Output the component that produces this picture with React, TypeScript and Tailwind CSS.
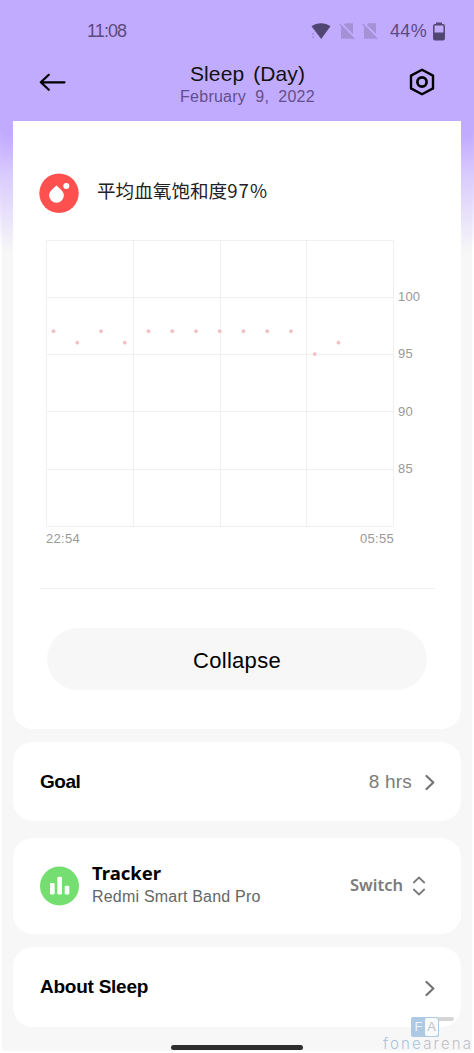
import type { ReactNode } from 'react';
import clsx from 'clsx';

const samples = [97, 96, 97, 96, 97, 97, 97, 97, 97, 97, 97, 95, 96];
const axisTicks = [100, 95, 90, 85];

function NoSimIcon() {
  return (
    <svg width="17" height="18" viewBox="0 0 17 18" aria-hidden="true">
      <path d="M6.500 1.300H14v15.400H2V5.500z" fill="#a592d6" />
      <path d="M2 1.300 16 15.500" stroke="#c1abff" strokeWidth="2" />
      <path d="M.5 2 15.200 17" stroke="#a592d6" strokeWidth="1.400" />
    </svg>
  );
}

function StatusBar() {
  return (
    <div className="flex h-[62px] items-center pr-[26px] pl-[85px] text-[18px] text-[#5b4a80]">
      <span className="tracking-[-0.9px]">11:08</span>
      <div className="ml-auto flex items-center">
        <svg className="mr-[7px]" width="21" height="18" viewBox="0 0 21 18" aria-hidden="true">
          <path d="M.5 4.300C6 .2 14 .2 19.500 4.300L10.200 17z" fill="#514671" />
          <path d="m.5 12.500 1.500-2 1.500 2zM.5 14.500l1.500 2 1.500-2z" fill="#a08bd0" />
        </svg>
        <NoSimIcon />
        <span className="ml-[6px]">
          <NoSimIcon />
        </span>
        <span className="ml-[11px] tracking-[0.3px]">44%</span>
        <svg className="ml-[5px]" width="14" height="19" viewBox="0 0 14 19" aria-hidden="true">
          <path d="M4 .5h6v2H4z" fill="#514671" />
          <rect x="1.800" y="2.700" width="10.400" height="15" rx="1.300" fill="none" stroke="#514671" strokeWidth="1.500" />
          <path d="M2 10.500h10v7H2z" fill="#514671" />
        </svg>
      </div>
    </div>
  );
}

function TitleBar() {
  return (
    <header className="flex h-[59px] items-start pr-[37px] pl-[37px]">
      <button aria-label="Back" className="mt-[11px]">
        <svg width="27" height="20" viewBox="0 0 27 20" fill="none" stroke="#000" strokeWidth="2.200" strokeLinecap="round" strokeLinejoin="round">
          <path d="M1.800 9.300H25.500M9.800 1.800 1.800 9.300l8 7.500" />
        </svg>
      </button>
      <div className="flex-1 pl-[21px] text-center">
        <h1 className="text-[21px] leading-[24px] tracking-[0.1px] text-[#111] [word-spacing:3px]">Sleep (Day)</h1>
        <p className="text-[16px] leading-[22px] tracking-[0.25px] text-[#634e8d] [word-spacing:4.500px]">February 9, 2022</p>
      </div>
      <button aria-label="Settings" className="mr-[-1px] mt-[6px]">
        <svg width="28" height="28" viewBox="0 0 28 28" fill="none" stroke="#000" strokeWidth="2.400" strokeLinejoin="round">
          <path d="M14 1.800 25 7.600v12.800L14 26.200 3 20.400V7.600z" />
          <circle cx="14" cy="14" r="4.600" strokeWidth="2.800" />
        </svg>
      </button>
    </header>
  );
}

function OxygenChart() {
  return (
    <div className="ml-[33px] text-[13px] leading-[14px] text-[#999]">
      <div className="flex">
        <svg width="348" height="288" viewBox="0 0 348 288" aria-hidden="true">
          <g stroke="#f0f0f0">
            {[0, 1, 2, 3, 4].map((i) => (
              <line key={i} x1={0.5 + Math.round(i * 86.8)} x2={0.5 + Math.round(i * 86.8)} y1="0" y2="287" />
            ))}
            {[0, 57, 114, 171, 229, 286].map((y) => (
              <line key={y} x1="0" x2="348" y1={y + 0.5} y2={y + 0.5} />
            ))}
          </g>
          {samples.map((value, i) => (
            <circle key={i} cx={7.5 + i * 23.75} cy={91.2 + (97 - value) * 11.45} r="1.900" fill="#f3bfc6" />
          ))}
        </svg>
        <div className="ml-[4px] flex flex-col gap-[43.300px] pt-[50px] tracking-[0.2px]">
          {axisTicks.map((tick) => (
            <span key={tick}>{tick}</span>
          ))}
        </div>
      </div>
      <div className="mt-[4px] flex w-[348px] justify-between tracking-[0.3px]">
        <span>22:54</span>
        <span>05:55</span>
      </div>
    </div>
  );
}

function Card({ className, children }: { className?: string; children: ReactNode }) {
  return <section className={clsx('flex items-center rounded-[20px] bg-white pr-[26px] pl-[27px]', className)}>{children}</section>;
}

function Chevron() {
  return (
    <svg className="mt-[2px] ml-[13px]" width="10" height="17" viewBox="0 0 10 17" fill="none" stroke="#737373" strokeWidth="2.200" strokeLinecap="round" strokeLinejoin="round">
      <path d="m1.500 2 6.800 6.500L1.500 15" />
    </svg>
  );
}

function Watermark() {
  return (
    <div className="absolute top-[1017px] left-[383px] w-[90px]" aria-hidden="true">
      <div className="ml-[28px] flex items-start">
        <div className="flex h-[20px] w-[28px] rounded-[2px] bg-[#adc9e4] p-[1px] text-center text-[13px] leading-[18px]">
          <span className="w-[13px] text-[#edf4fa]">F</span>
          <span className="w-[13px] rounded-[2px] bg-[#f8fafc] text-[#bdc5cd]">A</span>
        </div>
        <div className="h-[4px] w-[15px] rounded-r-[2px] bg-[#d5d5d5]" />
      </div>
      <p className="font-['Inter','Liberation_Sans',sans-serif] text-[15px] leading-[14px] font-light tracking-[2.200px] whitespace-nowrap text-[#bfc0c6]">
        <span className="text-[#a6c4e0]">fone</span>arena
      </p>
    </div>
  );
}

export default function App() {
  return (
    <div className="relative h-[1053px] w-[474px] overflow-hidden bg-[linear-gradient(#c1abff_130px,#fff_250px)] font-['Liberation_Sans','Noto_Sans_CJK_SC',sans-serif]">
      <div className="mx-[2px] h-[1051px] bg-[linear-gradient(#c1abff_135px,#d9cbfd_175px,#f7f7f7_253px)]">
        <StatusBar />
        <TitleBar />
        <main className="mr-[11px] ml-[11px]">
          <section className="h-[608px] rounded-b-[20px] bg-white pt-[52px]">
            <div className="mb-[27px] ml-[26px] flex h-[40px] items-center">
              <svg width="40" height="40" viewBox="0 0 40 40" aria-hidden="true">
                <circle cx="20" cy="20.300" r="19.700" fill="#ff5050" />
                <path d="M17.500 12.500c3 2.700 7.400 6 7.400 9.800a7.400 7.400 0 0 1-14.800 0c0-3.800 4.400-7.100 7.400-9.800z" fill="#fff" />
                <circle cx="27.300" cy="13.100" r="3" fill="#fff" />
              </svg>
              <h2 className="mt-[-6px] ml-[18px] font-['Noto_Sans_CJK_SC',sans-serif] text-[18.600px] leading-[28px] text-[#222]">
                平均血氧饱和度<span className="tracking-[1.100px]">97%</span>
              </h2>
            </div>
            <OxygenChart />
            <hr className="mt-[42px] mr-[26px] ml-[27px] border-[#f0f0f0]" />
            <button className="mt-[39px] ml-[34px] block h-[62px] w-[380px] rounded-full bg-[#f7f7f7] pt-[2px] text-[22px] tracking-[0.3px] text-black">
              Collapse
            </button>
          </section>

          <Card className="mt-[13px] h-[79px]">
            <h2 className="mt-[2px] text-[19px] font-bold tracking-[-0.5px]">Goal</h2>
            <span className="mt-[2px] ml-auto text-[19px] tracking-[0.2px] text-[#7b7b7b]">8 hrs</span>
            <Chevron />
          </Card>

          <Card className="mt-[17px] h-[96px]">
            <svg width="39" height="40" viewBox="0 0 39 40" aria-hidden="true">
              <circle cx="19.500" cy="20" r="19.500" fill="#74df70" />
              <path d="M10.500 17.500h3.600v10.500h-3.600zM17.900 11.300h3.600V28h-3.600zM25.200 20.300h3.600V28h-3.600z" fill="#fff" stroke="#fff" strokeLinejoin="round" />
            </svg>
            <div className="ml-[13px]">
              <h2 className="mt-[-4px] pb-[1px] font-['Noto_Sans',sans-serif] text-[18.500px] leading-[25px] font-bold">Tracker</h2>
              <p className="text-[16px] leading-[22px] tracking-[0.2px] text-[#666]">Redmi Smart Band Pro</p>
            </div>
            <span className="mt-[-1px] ml-auto font-['Noto_Sans',sans-serif] text-[16.500px] font-semibold text-[#7b7b7b]">Switch</span>
            <svg className="mr-[9px] ml-[9px]" width="14" height="20" viewBox="0 0 14 20" fill="none" stroke="#7b7b7b" strokeWidth="1.800" strokeLinecap="round" strokeLinejoin="round">
              <path d="m1.800 6.500 5.200-5 5.200 5M1.800 13.500l5.200 5 5.200-5" />
            </svg>
          </Card>

          <Card className="mt-[13px] h-[80px]">
            <h2 className="mt-[1px] text-[19px] font-bold tracking-[-0.25px]">About Sleep</h2>
            <span className="ml-auto">
              <Chevron />
            </span>
          </Card>
        </main>
      </div>
      <div className="absolute top-[1045px] left-[171px] h-[5px] w-[132px] rounded-full bg-[#2e2e2e]" />
      <Watermark />
    </div>
  );
}
